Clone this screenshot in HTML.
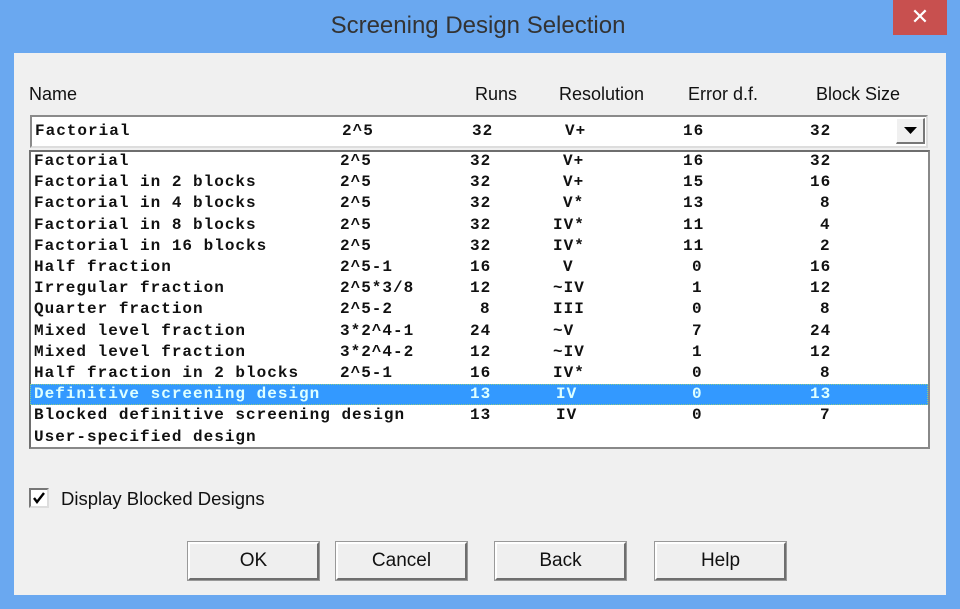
<!DOCTYPE html>
<html><head><meta charset="utf-8"><style>
*{margin:0;padding:0;box-sizing:border-box}
body{width:960px;height:609px;background:#6aa8f0;position:relative;overflow:hidden;font-family:"Liberation Sans",sans-serif}
.a{position:absolute;white-space:pre}
#title{left:0;width:956px;top:12px;text-align:center;font-size:24px;color:#333}
#close{left:893px;top:0;width:54px;height:35px;background:#c8504f;color:#fff;font-size:22px;text-align:center;line-height:34px}
#client{left:14px;top:53px;width:932px;height:542px;background:#f0f0f0}
.h{font-size:18px;color:#111;top:84px}
.m{font-family:"Liberation Mono",monospace;font-weight:bold;font-size:16px;letter-spacing:1px;color:#111}
#combo{left:30px;top:115px;width:898px;height:33px;background:#fff;border:2px solid #8a8a8a;border-right-color:#ddd;border-bottom-color:#ddd}
#dd{left:896px;top:118px;width:29px;height:26px;background:#f0f0f0;border:1px solid #fff;border-right:2px solid #777;border-bottom:2px solid #777}
#list{left:29px;top:150px;width:901px;height:299px;background:#fff;border:2px solid #6e6e6e;border-right-color:#888;border-bottom-color:#888}
.row{position:absolute;left:30px;width:898px;height:21px}
.sel{background:#3399ff;outline:1px dotted #8c8;outline-offset:-1px}
.sel span{color:#dff}
.row span{position:absolute;top:1px}
.btn{position:absolute;top:542px;width:131px;height:38px;background:#efefef;border:2px solid #fff;border-right-color:#6e6e6e;border-bottom-color:#6e6e6e;outline:1px solid #999;text-align:center;font-size:19px;line-height:33px;color:#111}
</style></head><body>
<div class="a" id="title">Screening Design Selection</div>
<div class="a" id="close">✕</div>
<div class="a" id="client"></div>
<div class="a h" style="left:29px">Name</div>
<div class="a h" style="left:475px">Runs</div>
<div class="a h" style="left:559px">Resolution</div>
<div class="a h" style="left:688px">Error d.f.</div>
<div class="a h" style="left:816px">Block Size</div>
<div class="a" id="combo"></div>
<div class="a m" style="left:35px;top:122px">Factorial</div>
<div class="a m" style="left:342px;top:122px">2^5</div>
<div class="a m" style="left:472px;top:122px">32</div>
<div class="a m" style="left:565px;top:122px">V+</div>
<div class="a m" style="left:683px;top:122px">16</div>
<div class="a m" style="left:810px;top:122px">32</div>
<div class="a" id="dd"><svg width="27" height="24" style="position:absolute;left:0;top:0"><path d="M7 8h13l-6.5 7z" fill="#000"/></svg></div>
<div class="a" id="list"></div>
<div class="a" style="left:29px;top:488px;width:20px;height:20px;background:#fff;border:2px solid #777;border-right-color:#ddd;border-bottom-color:#ddd"><svg width="16" height="16" style="position:absolute;left:0;top:0"><path d="M3 8l3 4 7-9" stroke="#000" stroke-width="2.4" fill="none"/></svg></div>
<div class="a" style="left:61px;top:488px;font-size:18.5px;color:#111">Display Blocked Designs</div>
<div class="btn" style="left:188px">OK</div>
<div class="btn" style="left:336px">Cancel</div>
<div class="btn" style="left:495px">Back</div>
<div class="btn" style="left:655px">Help</div>
<div class="row" style="top:151px"><span class="m" style="left:4px">Factorial</span><span class="m" style="left:310px">2^5</span><span class="m" style="left:440px">32</span><span class="m" style="left:533px">V+</span><span class="m" style="left:653px">16</span><span class="m" style="left:780px">32</span></div>
<div class="row" style="top:172px"><span class="m" style="left:4px">Factorial in 2 blocks</span><span class="m" style="left:310px">2^5</span><span class="m" style="left:440px">32</span><span class="m" style="left:533px">V+</span><span class="m" style="left:653px">15</span><span class="m" style="left:780px">16</span></div>
<div class="row" style="top:193px"><span class="m" style="left:4px">Factorial in 4 blocks</span><span class="m" style="left:310px">2^5</span><span class="m" style="left:440px">32</span><span class="m" style="left:533px">V*</span><span class="m" style="left:653px">13</span><span class="m" style="left:790px">8</span></div>
<div class="row" style="top:215px"><span class="m" style="left:4px">Factorial in 8 blocks</span><span class="m" style="left:310px">2^5</span><span class="m" style="left:440px">32</span><span class="m" style="left:523px">IV*</span><span class="m" style="left:653px">11</span><span class="m" style="left:790px">4</span></div>
<div class="row" style="top:236px"><span class="m" style="left:4px">Factorial in 16 blocks</span><span class="m" style="left:310px">2^5</span><span class="m" style="left:440px">32</span><span class="m" style="left:523px">IV*</span><span class="m" style="left:653px">11</span><span class="m" style="left:790px">2</span></div>
<div class="row" style="top:257px"><span class="m" style="left:4px">Half fraction</span><span class="m" style="left:310px">2^5-1</span><span class="m" style="left:440px">16</span><span class="m" style="left:533px">V</span><span class="m" style="left:662px">0</span><span class="m" style="left:780px">16</span></div>
<div class="row" style="top:278px"><span class="m" style="left:4px">Irregular fraction</span><span class="m" style="left:310px">2^5*3/8</span><span class="m" style="left:440px">12</span><span class="m" style="left:523px">~IV</span><span class="m" style="left:662px">1</span><span class="m" style="left:780px">12</span></div>
<div class="row" style="top:299px"><span class="m" style="left:4px">Quarter fraction</span><span class="m" style="left:310px">2^5-2</span><span class="m" style="left:450px">8</span><span class="m" style="left:523px">III</span><span class="m" style="left:662px">0</span><span class="m" style="left:790px">8</span></div>
<div class="row" style="top:321px"><span class="m" style="left:4px">Mixed level fraction</span><span class="m" style="left:310px">3*2^4-1</span><span class="m" style="left:440px">24</span><span class="m" style="left:523px">~V</span><span class="m" style="left:662px">7</span><span class="m" style="left:780px">24</span></div>
<div class="row" style="top:342px"><span class="m" style="left:4px">Mixed level fraction</span><span class="m" style="left:310px">3*2^4-2</span><span class="m" style="left:440px">12</span><span class="m" style="left:523px">~IV</span><span class="m" style="left:662px">1</span><span class="m" style="left:780px">12</span></div>
<div class="row" style="top:363px"><span class="m" style="left:4px">Half fraction in 2 blocks</span><span class="m" style="left:310px">2^5-1</span><span class="m" style="left:440px">16</span><span class="m" style="left:523px">IV*</span><span class="m" style="left:662px">0</span><span class="m" style="left:790px">8</span></div>
<div class="row sel" style="top:384px"><span class="m" style="left:4px">Definitive screening design</span><span class="m" style="left:440px">13</span><span class="m" style="left:526px">IV</span><span class="m" style="left:662px">0</span><span class="m" style="left:780px">13</span></div>
<div class="row" style="top:405px"><span class="m" style="left:4px">Blocked definitive screening design</span><span class="m" style="left:440px">13</span><span class="m" style="left:526px">IV</span><span class="m" style="left:662px">0</span><span class="m" style="left:790px">7</span></div>
<div class="row" style="top:427px"><span class="m" style="left:4px">User-specified design</span></div>
</body></html>
